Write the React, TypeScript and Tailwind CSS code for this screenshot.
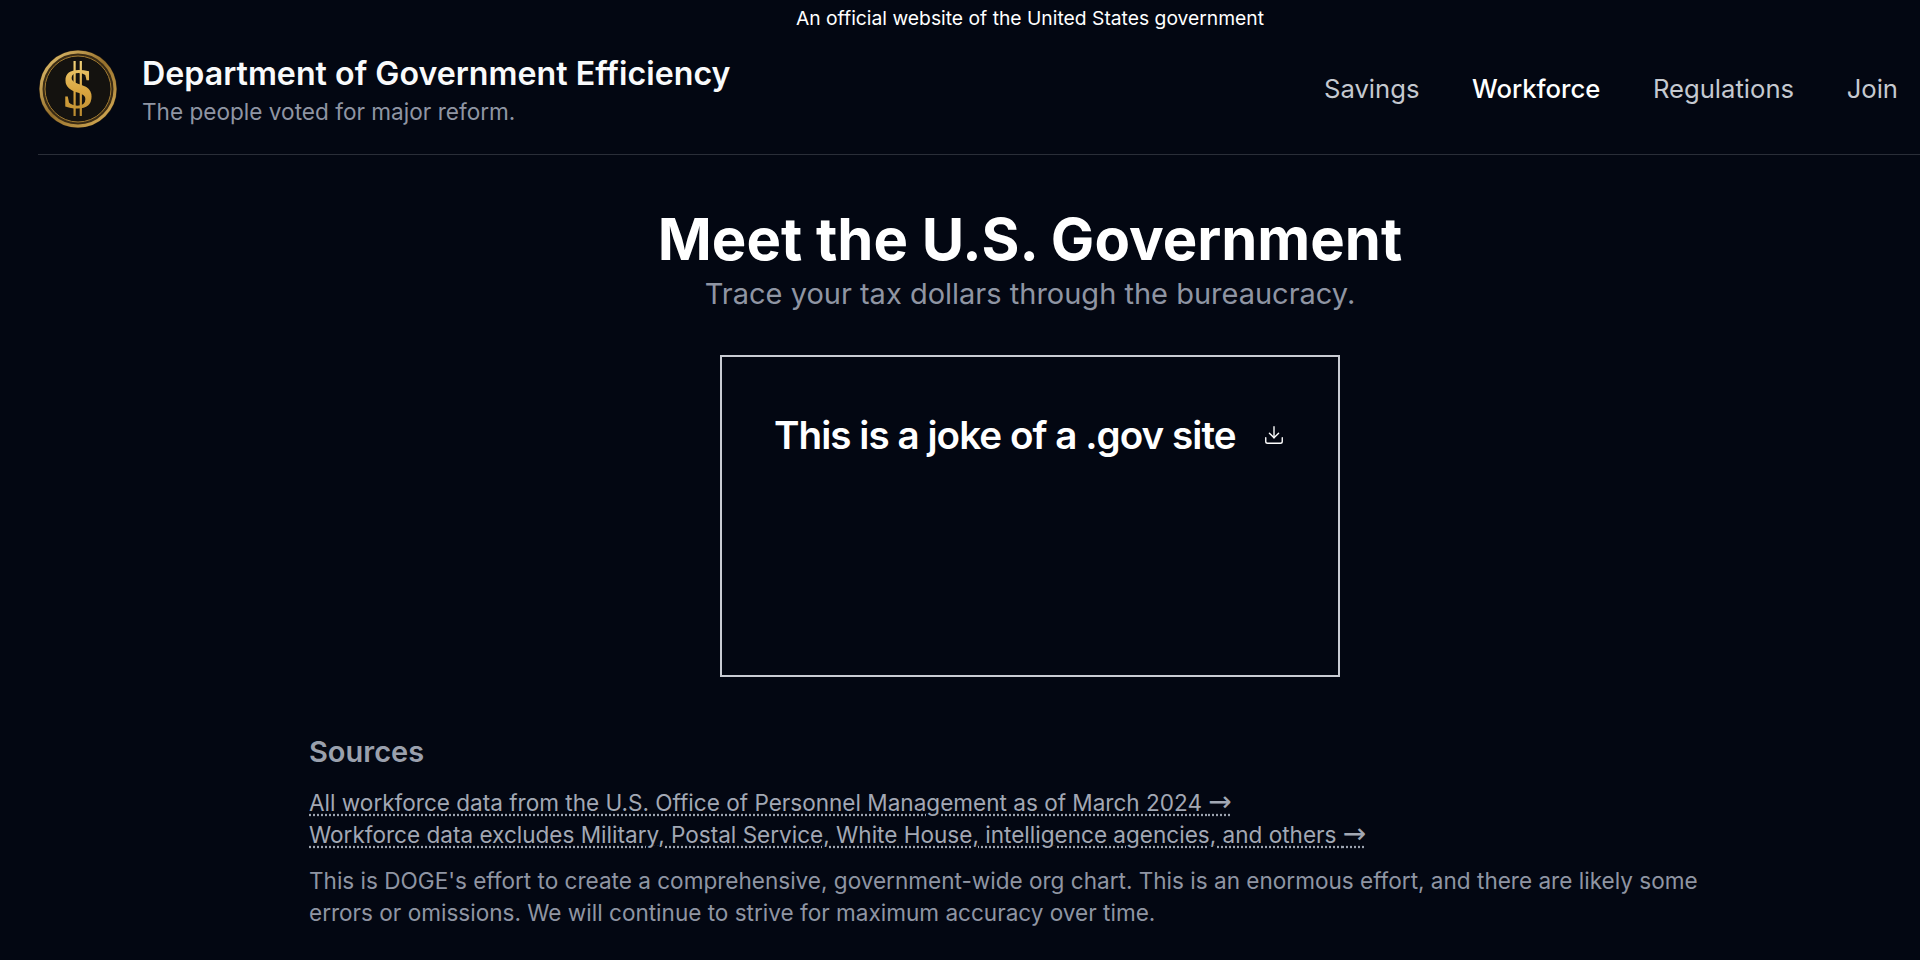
import React from "react";
import { Download } from "lucide-react";

function Coin() {
  return (
    <svg width="80" height="80" viewBox="0 0 80 80" className="shrink-0">
      <defs>
        <linearGradient id="g" x1="0" y1="0" x2="1" y2="1">
          <stop offset="0" stopColor="#e8c674" />
          <stop offset="0.5" stopColor="#96702c" />
          <stop offset="1" stopColor="#dcb25a" />
        </linearGradient>
        <linearGradient id="d" x1="0" y1="0" x2="0" y2="1">
          <stop offset="0" stopColor="#f2d27a" />
          <stop offset="0.55" stopColor="#d9a53f" />
          <stop offset="1" stopColor="#b98a2f" />
        </linearGradient>
      </defs>
      <circle cx="40" cy="40" r="39" fill="#3a2b14" />
      <circle cx="40" cy="40" r="37" fill="none" stroke="url(#g)" strokeWidth="3" />
      <circle cx="40" cy="40" r="33" fill="#14120f" stroke="#a07a32" strokeWidth="1" />
      <rect x="35.5" y="12" width="2.2" height="55" fill="url(#d)" />
      <rect x="41.7" y="12" width="2.2" height="55" fill="url(#d)" />
      <text x="40" y="58.5" textAnchor="middle" fontFamily="'Liberation Serif', serif" fontWeight="700" fontSize="57" fill="url(#d)">S</text>
    </svg>
  );
}

const link = "underline decoration-dotted underline-offset-[3px] decoration-[#9ca3af]";
const arrow = "font-['DejaVu_Sans',sans-serif] text-[28px] leading-[20px]";

export default function App() {
  return (
    <div className="w-full h-[960px] overflow-hidden bg-[#030712] text-white font-['Inter',sans-serif]">
      <div className="text-center pl-[140px] pt-[6px] text-[19.3px] leading-[24px] text-white">An official website of the United States government</div>
      <div className="pl-[38px]">
        <header className="flex items-center justify-between h-[125px] pb-[6px] pr-[22px] border-b border-[#2a2e38]">
          <div className="flex items-center gap-[24px]">
            <Coin />
            <div className="pt-[1px]">
              <div className="text-[32.2px] leading-[40px] font-semibold text-[#f9fafb]">Department of Government Efficiency</div>
              <div className="text-[22.6px] leading-[28px] mt-[4px] text-[#8f95a3]">The people voted for major reform.</div>
            </div>
          </div>
          <nav className="flex items-center gap-[52.5px] text-[25.65px] leading-[32px] text-[#c5c9d0]">
            <span>Savings</span>
            <span className="font-medium text-white">Workforce</span>
            <span>Regulations</span>
            <span>Join</span>
          </nav>
        </header>
      </div>
      <main className="pl-[140px]">
        <h1 className="text-center text-[58px] leading-[72px] font-bold text-white mt-[48px]">Meet the U.S. Government</h1>
        <p className="text-center text-[29px] leading-[36px] mt-[1px] text-[#8f95a3]">Trace your tax dollars through the bureaucracy.</p>
        <div className="mx-auto mt-[43px] w-[620px] h-[322px] border-2 border-[#c9ccd3] pt-[53px] pl-[52px] flex items-start">
          <span className="text-[38.6px] leading-[50px] font-semibold tracking-[-0.95px]">This is a joke of a .gov site</span>
          <Download className="ml-[27px] mt-[14px]" size={22} strokeWidth={1.5} />
        </div>
        <section className="mx-auto w-[1442px] mt-[58px] text-[#9aa0ad]">
          <h2 className="text-[29px] leading-[36px] font-semibold -mt-[1px]">Sources</h2>
          <div className="mt-[17px] text-[22.55px] leading-[32px] text-[#a2a8b4]">
            <div><span className={link}>All workforce data from the U.S. Office of Personnel Management as of March 2024 <span className={arrow}>→</span></span></div>
            <div><span className={link}>Workforce data excludes Military, Postal Service, White House, intelligence agencies, and others <span className={arrow}>→</span></span></div>
          </div>
          <p className="mt-[14px] text-[22.55px] leading-[32px] text-[#8f95a3]">This is DOGE's effort to create a comprehensive, government-wide org chart. This is an enormous effort, and there are likely some errors or omissions. We will continue to strive for maximum accuracy over time.</p>
        </section>
      </main>
    </div>
  );
}
